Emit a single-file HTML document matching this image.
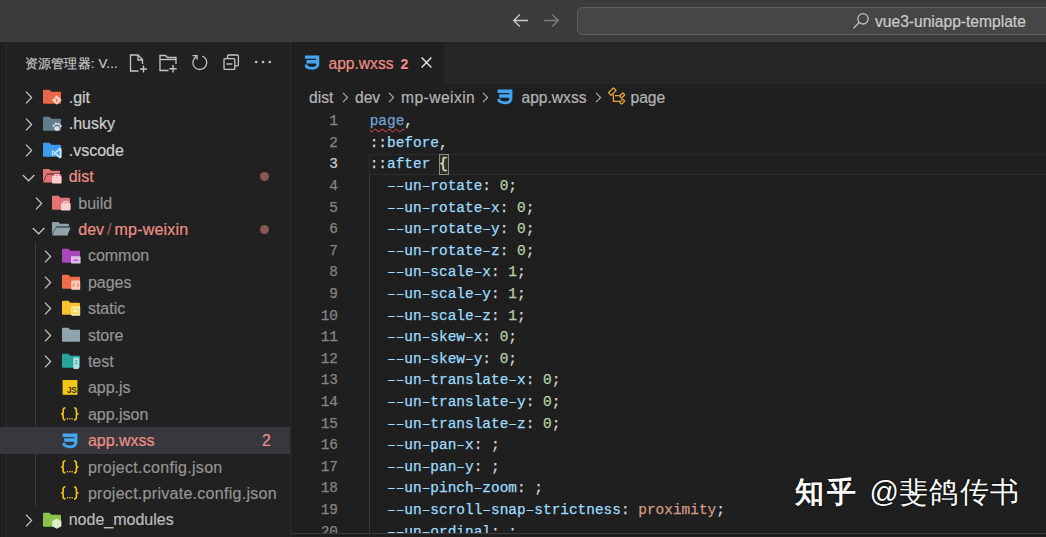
<!DOCTYPE html>
<html><head><meta charset="utf-8">
<style>
*{box-sizing:border-box;margin:0;padding:0}
html,body{width:1046px;height:537px;overflow:hidden;background:#1f1f1f;font-family:"Liberation Sans",sans-serif}
body{position:relative}
.abs{position:absolute}
svg{overflow:visible}
#title{left:0;top:0;width:1046px;height:42px;background:#3c3c3c}
#search{left:577px;top:7px;width:520px;height:28px;border:1px solid #5e5e5e;border-radius:6px;background:#464646}
#stxt{left:875px;top:13px;font-size:15.6px;-webkit-text-stroke:0.2px currentColor;line-height:18px;color:#cccccc;white-space:nowrap}
#side{left:0;top:42px;width:290px;height:495px;background:#212121}
#strip{left:0;top:42px;width:7px;height:495px;background:#212121;border-left:1px solid #1a1a1a;border-right:1px solid #2a2a2a}
#sideb{left:290px;top:42px;width:1px;height:495px;background:#2b2b2b}
#hdr{left:25px;top:55px;font-size:13.35px;letter-spacing:0.15px;-webkit-text-stroke:0.15px currentColor;line-height:18px;color:#cccccc;white-space:nowrap}
.row{position:absolute;left:0;width:290px;-webkit-text-stroke:0.2px currentColor;height:26.4px;font-size:15.6px;line-height:26.4px;color:#cccccc;white-space:nowrap}
.row .t{position:absolute;top:1px;font-size:16px}
.sel{background:#37373d}
.red{color:#ec8f84}
.dim{color:#949494}.nm{color:#bcbcbc}
.dot{position:absolute;left:259.5px;top:8.7px;width:9px;height:9px;border-radius:50%;background:#8a5752}
#tabs{left:291px;top:42px;width:755px;height:42px;background:#252525}
#tab{left:291px;top:42px;width:152px;height:42px;background:#1f1f1f;border-right:1px solid #1b1b1b}
#tabtxt{left:328.5px;top:53.6px;font-size:15.6px;-webkit-text-stroke:0.2px currentColor;line-height:20px;color:#ec8f84;white-space:nowrap}
#bc{left:0;top:85px;height:26.4px;line-height:26.4px;font-size:15.6px;color:#b4b4b4;-webkit-text-stroke:0.2px currentColor;white-space:nowrap}
#bc span{position:absolute;top:0}
.ln{position:absolute;left:291px;width:47px;-webkit-text-stroke:0.25px currentColor;text-align:right;font-family:"Liberation Mono",monospace;font-size:14.45px;color:#858585;height:21.6px;line-height:21.6px}
.ln.act{color:#cccccc}
.cl{position:absolute;left:369.7px;-webkit-text-stroke:0.25px currentColor;font-family:"Liberation Mono",monospace;font-size:14.45px;color:#d4d4d4;height:21.6px;line-height:21.6px;white-space:pre}
.p{color:#9cdcfe}.n{color:#b5d3a5}.s{color:#d39a86}.k{color:#74a2d6}
.sq{text-decoration:underline wavy #f04848;text-decoration-thickness:1.4px;text-underline-offset:3px}
.br{color:#e8e8c8}
#curline{left:369px;top:153.6px;width:677px;height:21.6px;border:1px solid #2c2c2c;border-right:none}
#iguide{left:369px;top:175.2px;width:1px;height:360px;background:#3c3c3c}
#panelb{left:291px;top:533px;width:755px;height:1px;background:#3a3a3a}
.wmc{position:absolute;top:472px;font-size:29px;line-height:40px;color:#ffffff;white-space:nowrap;text-shadow:0 0 2px #000,0 0 1px #000}.wmc.b{font-weight:bold}
</style></head><body>
<div id="title" class="abs"></div>
<svg class="abs" style="left:512px;top:13px" width="17" height="15" viewBox="0 0 17 15"><path d="M16 7.5H1.8M7.8 1.5l-6 6 6 6" fill="none" stroke="#cccccc" stroke-width="1.4"/></svg>
<svg class="abs" style="left:543px;top:13px" width="17" height="15" viewBox="0 0 17 15"><path d="M1 7.5h14.2M9.2 1.5l6 6-6 6" fill="none" stroke="#7c7c7c" stroke-width="1.4"/></svg>
<div id="search" class="abs"></div>
<svg class="abs" style="left:852px;top:12px" width="18" height="18" viewBox="0 0 18 18"><circle cx="11" cy="6.8" r="5.2" fill="none" stroke="#bdbdbd" stroke-width="1.3"/><path d="M7.2 10.6L1.5 16.3" stroke="#bdbdbd" stroke-width="1.4"/></svg>
<div id="stxt" class="abs">vue3-uniapp-template</div>

<div id="side" class="abs"></div>
<div id="strip" class="abs"></div>
<div id="sideb" class="abs"></div>
<div id="hdr" class="abs">资源管理器: V...</div>
<!-- header icons -->
<svg class="abs" style="left:129px;top:54px" width="20" height="19" viewBox="0 0 20 19"><path d="M9.5 17H1.5V1h7.5l4.5 4.5V10" fill="none" stroke="#c5c5c5" stroke-width="1.3"/><path d="M9 1v5h4.5" fill="none" stroke="#c5c5c5" stroke-width="1.3"/><path d="M14.5 11.5v7M11 15h7" stroke="#c5c5c5" stroke-width="1.4"/></svg>
<svg class="abs" style="left:159px;top:54px" width="20" height="19" viewBox="0 0 20 19"><path d="M9.5 16.5H1V1.5h5.5l2 2h8.5v6.5" fill="none" stroke="#c5c5c5" stroke-width="1.3"/><path d="M1 5.5h16" stroke="#c5c5c5" stroke-width="1.3"/><path d="M14 11v7.5M10.3 14.8h7.4" stroke="#c5c5c5" stroke-width="1.4"/></svg>
<svg class="abs" style="left:191px;top:54px" width="18" height="17" viewBox="0 0 18 17"><path d="M11.2 2A6.95 6.95 0 1 1 5.2 2.6" fill="none" stroke="#c5c5c5" stroke-width="1.3"/><path d="M1.6 1.6H6V5.8" fill="none" stroke="#c5c5c5" stroke-width="1.3"/></svg>
<svg class="abs" style="left:223px;top:54px" width="17" height="17" viewBox="0 0 17 17"><rect x="4.6" y="1" width="10.8" height="10.8" rx="1" fill="none" stroke="#c5c5c5" stroke-width="1.3"/><rect x="1" y="4.6" width="10.8" height="10.8" rx="1" fill="#212121" stroke="#c5c5c5" stroke-width="1.3"/><path d="M3.5 10h5.8" stroke="#c5c5c5" stroke-width="1.4"/></svg>
<svg class="abs" style="left:254px;top:60px" width="18" height="4" viewBox="0 0 18 4"><circle cx="2.2" cy="2" r="1.3" fill="#c5c5c5"/><circle cx="9" cy="2" r="1.3" fill="#c5c5c5"/><circle cx="15.8" cy="2" r="1.3" fill="#c5c5c5"/></svg>

<div class="row" style="top:84.0px"><svg style="position:absolute;left:25.0px;top:7.2px" width="8" height="13" viewBox="0 0 8 13"><path d="M1 0.6l5.6 5.9-5.6 5.9" fill="none" stroke="#c5c5c5" stroke-width="1.25"/></svg><svg style="position:absolute;left:41.5px;top:5.2px" width="20" height="16" viewBox="0 0 20 16"><path d="M2 0.8h5.4l1.9 1.9H18a1 1 0 0 1 1 1V13.8a1 1 0 0 1-1 1H2a1 1 0 0 1-1-1V1.8a1 1 0 0 1 1-1z" fill="#e8674a"/><path d="M14.8 6.2l4.8 4.8-4.8 4.8-4.8-4.8z" fill="#fbd0c2"/><path d="M13.2 9.4l1.6 1.6M14.8 11v2.2" stroke="#e8674a" stroke-width="1"/><circle cx="14.8" cy="11" r=".9" fill="#e8674a"/></svg><span class="t " style="left:68.7px">.git</span></div>
<div class="row" style="top:110.4px"><svg style="position:absolute;left:25.0px;top:7.2px" width="8" height="13" viewBox="0 0 8 13"><path d="M1 0.6l5.6 5.9-5.6 5.9" fill="none" stroke="#c5c5c5" stroke-width="1.25"/></svg><svg style="position:absolute;left:41.5px;top:5.2px" width="20" height="16" viewBox="0 0 20 16"><path d="M2 0.8h5.4l1.9 1.9H18a1 1 0 0 1 1 1V13.8a1 1 0 0 1-1 1H2a1 1 0 0 1-1-1V1.8a1 1 0 0 1 1-1z" fill="#607d8b"/><ellipse cx="15" cy="12.6" rx="2.7" ry="2.3" fill="#d6e0e5"/><circle cx="11.6" cy="9.6" r="1.2" fill="#d6e0e5"/><circle cx="13.9" cy="7.7" r="1.2" fill="#d6e0e5"/><circle cx="16.6" cy="7.9" r="1.2" fill="#d6e0e5"/><circle cx="18.6" cy="10" r="1.2" fill="#d6e0e5"/></svg><span class="t " style="left:68.7px">.husky</span></div>
<div class="row" style="top:136.8px"><svg style="position:absolute;left:25.0px;top:7.2px" width="8" height="13" viewBox="0 0 8 13"><path d="M1 0.6l5.6 5.9-5.6 5.9" fill="none" stroke="#c5c5c5" stroke-width="1.25"/></svg><svg style="position:absolute;left:41.5px;top:5.2px" width="20" height="16" viewBox="0 0 20 16"><path d="M2 0.8h5.4l1.9 1.9H18a1 1 0 0 1 1 1V13.8a1 1 0 0 1-1 1H2a1 1 0 0 1-1-1V1.8a1 1 0 0 1 1-1z" fill="#3c9cf0"/><path d="M17.6 5.6L12.9 9.9 10.6 8.2 9.8 8.7V13.5L10.6 14 12.9 12.3 17.6 16.4 19.6 15.5V6.5z M17.6 8.4V13.8L14.2 11.1z M10.9 9.7L12.3 11.1 10.9 12.5z" fill="#c6e3fb" fill-rule="evenodd"/></svg><span class="t " style="left:68.7px">.vscode</span></div>
<div class="row" style="top:163.2px"><svg style="position:absolute;left:22.2px;top:11px" width="13" height="8" viewBox="0 0 13 8"><path d="M0.8 1l5.8 5.8 5.8-5.8" fill="none" stroke="#c5c5c5" stroke-width="1.25"/></svg><svg style="position:absolute;left:41.5px;top:5.2px" width="20" height="16" viewBox="0 0 20 16"><path d="M2 1h5.2l1.8 1.8H17a1 1 0 0 1 1 1V5.6H5.2L1 13.5V2a1 1 0 0 1 1-1z" fill="#e57373"/><path d="M5 6.4H19.6L16.4 14.6H1.2z" fill="#e57373"/><rect x="10" y="8" width="9.6" height="7.6" rx="1" fill="#ffcdd2"/><path d="M12.8 8.2V6.6h4v1.6" stroke="#ffcdd2" stroke-width="1.3" fill="none"/></svg><span class="t red" style="left:68.7px">dist</span><span class="dot"></span></div>
<div class="row" style="top:189.6px"><svg style="position:absolute;left:34.6px;top:7.2px" width="8" height="13" viewBox="0 0 8 13"><path d="M1 0.6l5.6 5.9-5.6 5.9" fill="none" stroke="#c5c5c5" stroke-width="1.25"/></svg><svg style="position:absolute;left:51.1px;top:5.2px" width="20" height="16" viewBox="0 0 20 16"><path d="M2 0.8h5.4l1.9 1.9H18a1 1 0 0 1 1 1V13.8a1 1 0 0 1-1 1H2a1 1 0 0 1-1-1V1.8a1 1 0 0 1 1-1z" fill="#e57373"/><rect x="10" y="8" width="9.6" height="7.6" rx="1" fill="#ffcdd2"/><path d="M12.8 8.2V6.6h4v1.6" stroke="#ffcdd2" stroke-width="1.3" fill="none"/></svg><span class="t dim" style="left:78.3px">build</span></div>
<div class="row" style="top:216.0px"><svg style="position:absolute;left:31.8px;top:11px" width="13" height="8" viewBox="0 0 13 8"><path d="M0.8 1l5.8 5.8 5.8-5.8" fill="none" stroke="#c5c5c5" stroke-width="1.25"/></svg><svg style="position:absolute;left:51.1px;top:5.2px" width="20" height="16" viewBox="0 0 20 16"><path d="M2 1h5.2l1.8 1.8H17a1 1 0 0 1 1 1V5.6H5.2L1 13.5V2a1 1 0 0 1 1-1z" fill="#90a4ae"/><path d="M5 6.4H19.6L16.4 14.6H1.2z" fill="#90a4ae"/></svg><span class="t red" style="left:78.3px">dev<span style="opacity:.55;margin:0 3px">/</span><span style="letter-spacing:0.2px">mp-weixin</span></span><span class="dot"></span></div>
<div class="row" style="top:242.4px"><svg style="position:absolute;left:44.2px;top:7.2px" width="8" height="13" viewBox="0 0 8 13"><path d="M1 0.6l5.6 5.9-5.6 5.9" fill="none" stroke="#c5c5c5" stroke-width="1.25"/></svg><svg style="position:absolute;left:60.7px;top:5.2px" width="20" height="16" viewBox="0 0 20 16"><path d="M2 0.8h5.4l1.9 1.9H18a1 1 0 0 1 1 1V13.8a1 1 0 0 1-1 1H2a1 1 0 0 1-1-1V1.8a1 1 0 0 1 1-1z" fill="#ab47bc"/><rect x="10" y="8.2" width="9.6" height="7.4" rx="0.8" fill="#e1bee7"/><path d="M12.4 12.2h4.8" stroke="#ab47bc" stroke-width="1.2"/></svg><span class="t dim" style="left:87.9px">common</span></div>
<div class="row" style="top:268.8px"><svg style="position:absolute;left:44.2px;top:7.2px" width="8" height="13" viewBox="0 0 8 13"><path d="M1 0.6l5.6 5.9-5.6 5.9" fill="none" stroke="#c5c5c5" stroke-width="1.25"/></svg><svg style="position:absolute;left:60.7px;top:5.2px" width="20" height="16" viewBox="0 0 20 16"><path d="M2 0.8h5.4l1.9 1.9H18a1 1 0 0 1 1 1V13.8a1 1 0 0 1-1 1H2a1 1 0 0 1-1-1V1.8a1 1 0 0 1 1-1z" fill="#ef6c4a"/><rect x="10.2" y="6.4" width="9" height="9.4" rx="1" fill="#ffccbc"/><path d="M13.4 9.2l-1.6 1.8 1.6 1.8M16 9.2l1.6 1.8-1.6 1.8" stroke="#ef6c4a" fill="none" stroke-width="1"/></svg><span class="t dim" style="left:87.9px">pages</span></div>
<div class="row" style="top:295.2px"><svg style="position:absolute;left:44.2px;top:7.2px" width="8" height="13" viewBox="0 0 8 13"><path d="M1 0.6l5.6 5.9-5.6 5.9" fill="none" stroke="#c5c5c5" stroke-width="1.25"/></svg><svg style="position:absolute;left:60.7px;top:5.2px" width="20" height="16" viewBox="0 0 20 16"><path d="M2 0.8h5.4l1.9 1.9H18a1 1 0 0 1 1 1V13.8a1 1 0 0 1-1 1H2a1 1 0 0 1-1-1V1.8a1 1 0 0 1 1-1z" fill="#fbc02d"/><rect x="10.2" y="6.4" width="9" height="9.4" rx="1" fill="#fff3b0"/><rect x="12" y="9" width="5.4" height="4.6" fill="none" stroke="#fbc02d" stroke-width="1"/></svg><span class="t dim" style="left:87.9px">static</span></div>
<div class="row" style="top:321.6px"><svg style="position:absolute;left:44.2px;top:7.2px" width="8" height="13" viewBox="0 0 8 13"><path d="M1 0.6l5.6 5.9-5.6 5.9" fill="none" stroke="#c5c5c5" stroke-width="1.25"/></svg><svg style="position:absolute;left:60.7px;top:5.2px" width="20" height="16" viewBox="0 0 20 16"><path d="M2 0.8h5.4l1.9 1.9H18a1 1 0 0 1 1 1V13.8a1 1 0 0 1-1 1H2a1 1 0 0 1-1-1V1.8a1 1 0 0 1 1-1z" fill="#90a4ae"/></svg><span class="t dim" style="left:87.9px">store</span></div>
<div class="row" style="top:348.0px"><svg style="position:absolute;left:44.2px;top:7.2px" width="8" height="13" viewBox="0 0 8 13"><path d="M1 0.6l5.6 5.9-5.6 5.9" fill="none" stroke="#c5c5c5" stroke-width="1.25"/></svg><svg style="position:absolute;left:60.7px;top:5.2px" width="20" height="16" viewBox="0 0 20 16"><path d="M2 0.8h5.4l1.9 1.9H18a1 1 0 0 1 1 1V13.8a1 1 0 0 1-1 1H2a1 1 0 0 1-1-1V1.8a1 1 0 0 1 1-1z" fill="#26a69a"/><rect x="12.2" y="4.6" width="5.8" height="11.4" rx="1.2" fill="#b2dfdb"/><path d="M14 8h2.4M14 10.4h2.4" stroke="#26a69a" stroke-width="1"/></svg><span class="t dim" style="left:87.9px">test</span></div>
<div class="row" style="top:374.4px"><svg style="position:absolute;left:62.2px;top:5.6px" width="18" height="15" viewBox="0 0 18 15"><rect x="0.6" y="0" width="14.8" height="14.8" fill="#f5c518"/><text x="14.3" y="13.4" font-family="Liberation Sans" font-weight="bold" font-size="8.2" fill="#3a3000" text-anchor="end" letter-spacing="-0.3">JS</text></svg><span class="t dim" style="left:87.9px">app.js</span></div>
<div class="row" style="top:400.8px"><svg style="position:absolute;left:60.1px;top:6px" width="19.5" preserveAspectRatio="none" height="14" viewBox="0 0 18 14"><g fill="none" stroke="#f5c518" stroke-width="1.5"><path d="M5 0.8C3 0.8 2.9 1.8 2.9 3.6V5.4C2.9 6.3 2.2 6.9 1 6.9C2.2 6.9 2.9 7.5 2.9 8.4V10.2C2.9 12 3 13 5 13"/><path d="M13 0.8C15 0.8 15.1 1.8 15.1 3.6V5.4C15.1 6.3 15.8 6.9 17 6.9C15.8 6.9 15.1 7.5 15.1 8.4V10.2C15.1 12 15 13 13 13"/></g><g fill="#f5c518"><circle cx="6.8" cy="11.8" r="0.8"/><circle cx="9" cy="11.8" r="0.8"/><circle cx="11.2" cy="11.8" r="0.8"/></g></svg><span class="t dim" style="left:87.9px">app.json</span></div>
<div class="row sel" style="top:427.2px"><svg style="position:absolute;left:62.2px;top:5.6px" width="18" height="15" viewBox="0 0 18 15"><path d="M0.6 0.4H15.4V4H0.6z M2.2 5.2H15.4V8.8H2.2z M12.2 0.4H15.4V10.8H12.2z" fill="#42a5f5"/><path d="M13.8 10.4C13.2 13 11 13.8 8 13.8C5.2 13.8 3.2 13 2 12V9.8" fill="none" stroke="#42a5f5" stroke-width="2.8"/></svg><span class="t red" style="left:87.9px">app.wxss</span><span class="t red" style="left:262px;font-size:15.6px;top:1px">2</span></div>
<div class="row" style="top:453.6px"><svg style="position:absolute;left:60.1px;top:6px" width="19.5" preserveAspectRatio="none" height="14" viewBox="0 0 18 14"><g fill="none" stroke="#f5c518" stroke-width="1.5"><path d="M5 0.8C3 0.8 2.9 1.8 2.9 3.6V5.4C2.9 6.3 2.2 6.9 1 6.9C2.2 6.9 2.9 7.5 2.9 8.4V10.2C2.9 12 3 13 5 13"/><path d="M13 0.8C15 0.8 15.1 1.8 15.1 3.6V5.4C15.1 6.3 15.8 6.9 17 6.9C15.8 6.9 15.1 7.5 15.1 8.4V10.2C15.1 12 15 13 13 13"/></g><g fill="#f5c518"><circle cx="6.8" cy="11.8" r="0.8"/><circle cx="9" cy="11.8" r="0.8"/><circle cx="11.2" cy="11.8" r="0.8"/></g></svg><span class="t dim" style="left:87.9px"><span style="letter-spacing:0.3px">project.config.json</span></span></div>
<div class="row" style="top:480.0px"><svg style="position:absolute;left:60.1px;top:6px" width="19.5" preserveAspectRatio="none" height="14" viewBox="0 0 18 14"><g fill="none" stroke="#f5c518" stroke-width="1.5"><path d="M5 0.8C3 0.8 2.9 1.8 2.9 3.6V5.4C2.9 6.3 2.2 6.9 1 6.9C2.2 6.9 2.9 7.5 2.9 8.4V10.2C2.9 12 3 13 5 13"/><path d="M13 0.8C15 0.8 15.1 1.8 15.1 3.6V5.4C15.1 6.3 15.8 6.9 17 6.9C15.8 6.9 15.1 7.5 15.1 8.4V10.2C15.1 12 15 13 13 13"/></g><g fill="#f5c518"><circle cx="6.8" cy="11.8" r="0.8"/><circle cx="9" cy="11.8" r="0.8"/><circle cx="11.2" cy="11.8" r="0.8"/></g></svg><span class="t dim" style="left:87.9px"><span style="letter-spacing:0.28px">project.private.config.json</span></span></div>
<div class="row" style="top:506.4px"><svg style="position:absolute;left:25.0px;top:7.2px" width="8" height="13" viewBox="0 0 8 13"><path d="M1 0.6l5.6 5.9-5.6 5.9" fill="none" stroke="#c5c5c5" stroke-width="1.25"/></svg><svg style="position:absolute;left:41.5px;top:5.2px" width="20" height="16" viewBox="0 0 20 16"><path d="M2 0.8h5.4l1.9 1.9H18a1 1 0 0 1 1 1V13.8a1 1 0 0 1-1 1H2a1 1 0 0 1-1-1V1.8a1 1 0 0 1 1-1z" fill="#8bc34a"/><path d="M14.8 6.4l4.6 2.6v5.2l-4.6 2.6-4.6-2.6V9z" fill="#dcedc8"/></svg><span class="t nm" style="left:68.7px">node_modules</span></div><div class="abs" style="left:35px;top:242.4px;width:1px;height:264.0px;background:#3a3a3a"></div>

<div id="tabs" class="abs"></div>
<div id="tab" class="abs"></div>
<svg class="abs" style="left:304px;top:54.8px" width="16.2" height="14.5" viewBox="0 0 16 15"><path d="M0.6 0.4H15.4V4H0.6z M2.2 5.2H15.4V8.8H2.2z M12.2 0.4H15.4V10.8H12.2z" fill="#42a5f5"/><path d="M13.8 10.4C13.2 13 11 13.8 8 13.8C5.2 13.8 3.2 13 2 12V9.8" fill="none" stroke="#42a5f5" stroke-width="2.8"/></svg>
<div id="tabtxt" class="abs">app.wxss<span style="position:absolute;left:72px;top:0.5px;font-size:14px;font-weight:bold">2</span></div>
<svg class="abs" style="left:421px;top:57px" width="11" height="11" viewBox="0 0 11 11"><path d="M0.6 0.6l9.8 9.8M10.4 0.6L0.6 10.4" stroke="#e6e6e6" stroke-width="1.4"/></svg>

<div id="bc" class="abs">
<span style="left:309px">dist</span>
<span style="left:355px">dev</span>
<span style="left:401px;letter-spacing:0.45px">mp-weixin</span>
<span style="left:521.5px">app.wxss</span>
<span style="left:630.5px">page</span>
</div>
<svg class="abs" style="left:342px;top:92px" width="7" height="11" viewBox="0 0 7 11"><path d="M1 0.8l4.6 4.7L1 10.2" fill="none" stroke="#a9a9a9" stroke-width="1.2"/></svg>
<svg class="abs" style="left:388px;top:92px" width="7" height="11" viewBox="0 0 7 11"><path d="M1 0.8l4.6 4.7L1 10.2" fill="none" stroke="#a9a9a9" stroke-width="1.2"/></svg>
<svg class="abs" style="left:482px;top:92px" width="7" height="11" viewBox="0 0 7 11"><path d="M1 0.8l4.6 4.7L1 10.2" fill="none" stroke="#a9a9a9" stroke-width="1.2"/></svg>
<svg class="abs" style="left:595px;top:92px" width="7" height="11" viewBox="0 0 7 11"><path d="M1 0.8l4.6 4.7L1 10.2" fill="none" stroke="#a9a9a9" stroke-width="1.2"/></svg>
<svg class="abs" style="left:496.5px;top:88.5px" width="16" height="15" viewBox="0 0 16 15"><path d="M0.6 0.4H15.4V4H0.6z M2.2 5.2H15.4V8.8H2.2z M12.2 0.4H15.4V10.8H12.2z" fill="#42a5f5"/><path d="M13.8 10.4C13.2 13 11 13.8 8 13.8C5.2 13.8 3.2 13 2 12V9.8" fill="none" stroke="#42a5f5" stroke-width="2.8"/></svg>
<svg class="abs" style="left:604px;top:84px" width="26" height="24" viewBox="0 0 26 24"><g fill="none" stroke="#e9a23b" stroke-width="1.3" stroke-linejoin="round"><rect x="4.8" y="5.7" width="7" height="3.8" rx="0.6" transform="rotate(-45 8.3 7.6)"/><path d="M9.4 10.6V17.4H15.8M10.8 11.6H15.8"/><rect x="15.9" y="10.1" width="4.6" height="2.8" rx="0.5" transform="rotate(-45 18.2 11.5)"/><rect x="15.9" y="16.2" width="4.6" height="2.8" rx="0.5" transform="rotate(-45 18.2 17.6)"/></g></svg>

<div id="curline" class="abs"></div>
<div id="iguide" class="abs"></div>
<div class="abs" style="left:439px;top:153.6px;width:10px;height:21.6px;border:1px solid #8e8e78;background:#2c3229"></div>
<div class="ln" style="top:111.2px">1</div><div class="cl" style="top:111.2px"><span class="k sq">page</span>,</div>
<div class="ln" style="top:132.8px">2</div><div class="cl" style="top:132.8px">::<span class="p">before</span>,</div>
<div class="ln act" style="top:154.4px">3</div><div class="cl" style="top:154.4px">::<span class="p">after</span> <span class="br">{</span></div>
<div class="ln" style="top:176.0px">4</div><div class="cl" style="top:176.0px">  <span class="p">––un–rotate</span>: <span class="n">0</span>;</div>
<div class="ln" style="top:197.6px">5</div><div class="cl" style="top:197.6px">  <span class="p">––un–rotate–x</span>: <span class="n">0</span>;</div>
<div class="ln" style="top:219.2px">6</div><div class="cl" style="top:219.2px">  <span class="p">––un–rotate–y</span>: <span class="n">0</span>;</div>
<div class="ln" style="top:240.8px">7</div><div class="cl" style="top:240.8px">  <span class="p">––un–rotate–z</span>: <span class="n">0</span>;</div>
<div class="ln" style="top:262.4px">8</div><div class="cl" style="top:262.4px">  <span class="p">––un–scale–x</span>: <span class="n">1</span>;</div>
<div class="ln" style="top:284.0px">9</div><div class="cl" style="top:284.0px">  <span class="p">––un–scale–y</span>: <span class="n">1</span>;</div>
<div class="ln" style="top:305.6px">10</div><div class="cl" style="top:305.6px">  <span class="p">––un–scale–z</span>: <span class="n">1</span>;</div>
<div class="ln" style="top:327.2px">11</div><div class="cl" style="top:327.2px">  <span class="p">––un–skew–x</span>: <span class="n">0</span>;</div>
<div class="ln" style="top:348.8px">12</div><div class="cl" style="top:348.8px">  <span class="p">––un–skew–y</span>: <span class="n">0</span>;</div>
<div class="ln" style="top:370.4px">13</div><div class="cl" style="top:370.4px">  <span class="p">––un–translate–x</span>: <span class="n">0</span>;</div>
<div class="ln" style="top:392.0px">14</div><div class="cl" style="top:392.0px">  <span class="p">––un–translate–y</span>: <span class="n">0</span>;</div>
<div class="ln" style="top:413.6px">15</div><div class="cl" style="top:413.6px">  <span class="p">––un–translate–z</span>: <span class="n">0</span>;</div>
<div class="ln" style="top:435.2px">16</div><div class="cl" style="top:435.2px">  <span class="p">––un–pan–x</span>: ;</div>
<div class="ln" style="top:456.8px">17</div><div class="cl" style="top:456.8px">  <span class="p">––un–pan–y</span>: ;</div>
<div class="ln" style="top:478.4px">18</div><div class="cl" style="top:478.4px">  <span class="p">––un–pinch–zoom</span>: ;</div>
<div class="ln" style="top:500.0px">19</div><div class="cl" style="top:500.0px">  <span class="p">––un–scroll–snap–strictness</span>: <span class="s">proximity</span>;</div>
<div class="ln" style="top:521.6px">20</div><div class="cl" style="top:521.6px">  <span class="p">––un–ordinal</span>: ;</div>
<div id="panelb" class="abs"></div><div class="abs" style="left:291px;top:534px;width:755px;height:3px;background:#1f1f1f"></div>
<span class="wmc b" style="left:795px">知</span><span class="wmc b" style="left:827px">乎</span><span class="wmc" style="left:869.5px">@</span><span class="wmc" style="left:898.8px">斐</span><span class="wmc" style="left:929px">鸽</span><span class="wmc" style="left:960px">传</span><span class="wmc" style="left:990px">书</span>
</body></html>
